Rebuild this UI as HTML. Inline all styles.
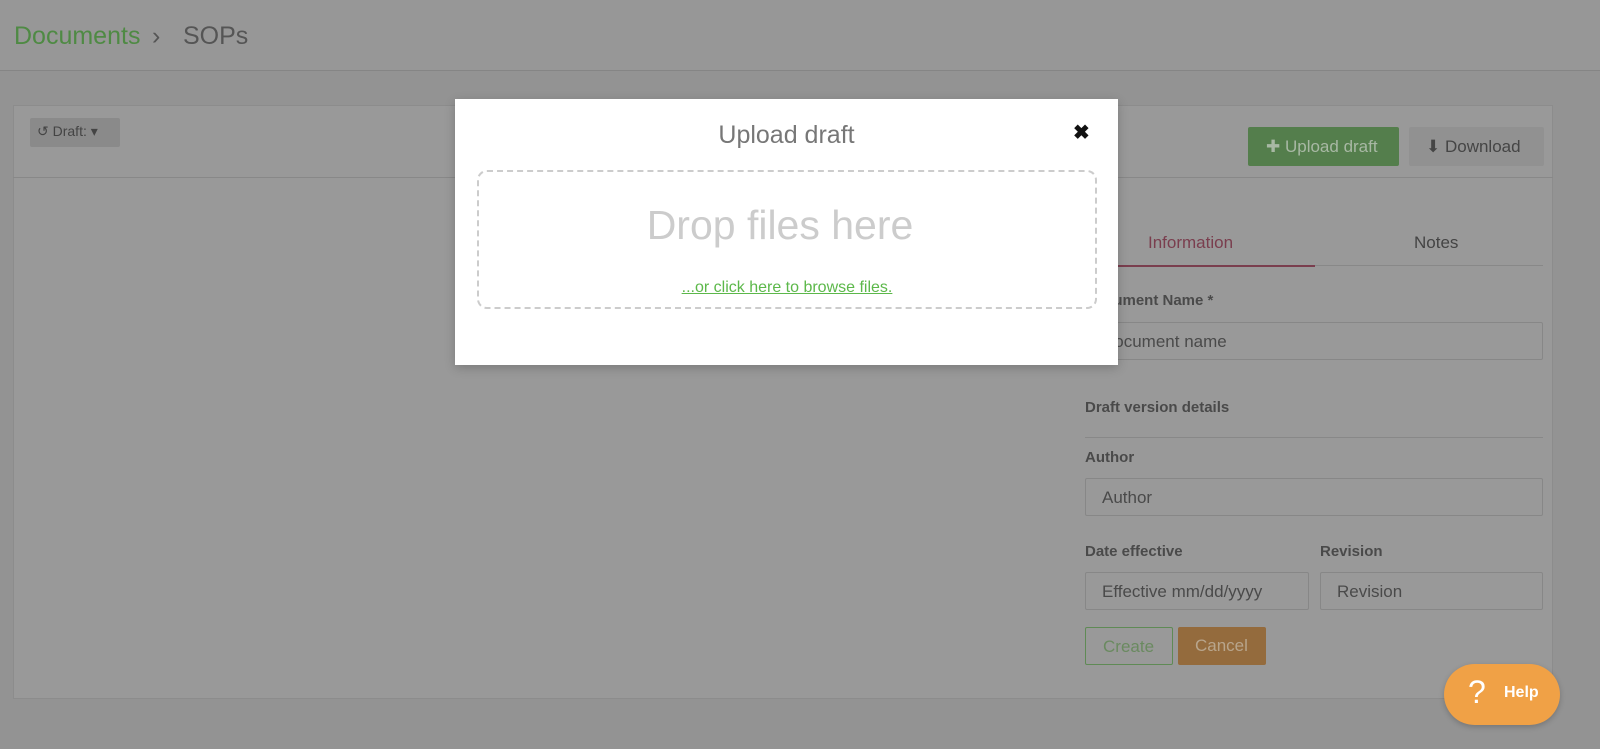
<!DOCTYPE html>
<html><head><style>
*{box-sizing:border-box;margin:0;padding:0}
body{width:1600px;height:749px;background:#939393;font-family:"Liberation Sans",sans-serif;position:relative;overflow:hidden}
.a{position:absolute}
.hdr{left:0;top:0;width:1600px;height:71px;background:#979797;border-bottom:1px solid #858585}
.card{left:13px;top:105px;width:1540px;height:594px;background:#999;border:1px solid #8c8c8c}
.inp{position:absolute;height:38px;border:1px solid #878787;border-radius:2px;background:#999;color:#4a4a4a;font-size:17px;padding:9px 16px}
.lbl{position:absolute;color:#4a4a4a;font-size:15px;font-weight:bold}
</style></head><body>
<div class="a hdr"></div>
<div class="a" style="left:14px;top:22px;font-size:25px;color:#4f8a44">Documents</div>
<div class="a" style="left:152px;top:22px;font-size:25px;color:#555">›</div>
<div class="a" style="left:183px;top:22px;font-size:25px;color:#555">SOPs</div>
<div class="a card"></div>
<div class="a" style="left:13px;top:177px;width:1540px;height:1px;background:#888"></div>
<div class="a" style="left:30px;top:118px;width:90px;height:29px;background:#8a8a8a;border-radius:2px;color:#444;font-size:14px;padding:5px 0 0 7px">↺ Draft: ▾</div>
<div class="a" style="left:1248px;top:127px;width:151px;height:39px;background:#547e4c;border-radius:2px;color:#9a9a9a;font-size:17px;padding:10px 0 0 18px;color:#a8b8a4">✚ Upload draft</div>
<div class="a" style="left:1409px;top:127px;width:135px;height:39px;background:#919191;border-radius:2px;color:#454545;font-size:17px;padding:10px 0 0 17px">⬇ Download</div>
<div class="a" style="left:1148px;top:233px;font-size:17px;color:#7a3e4e">Information</div>
<div class="a" style="left:1414px;top:233px;font-size:17px;color:#444">Notes</div>
<div class="a" style="left:1085px;top:265px;width:458px;height:1px;background:#888"></div>
<div class="a" style="left:1085px;top:265px;width:230px;height:2px;background:#7a3e4e"></div>
<div class="lbl" style="left:1085px;top:292px">Document Name *</div>
<div class="inp" style="left:1085px;top:322px;width:458px">Document name</div>
<div class="lbl" style="left:1085px;top:399px">Draft version details</div>
<div class="a" style="left:1085px;top:437px;width:458px;height:1px;background:#888"></div>
<div class="lbl" style="left:1085px;top:449px">Author</div>
<div class="inp" style="left:1085px;top:478px;width:458px">Author</div>
<div class="lbl" style="left:1085px;top:543px">Date effective</div>
<div class="lbl" style="left:1320px;top:543px">Revision</div>
<div class="inp" style="left:1085px;top:572px;width:224px">Effective mm/dd/yyyy</div>
<div class="inp" style="left:1320px;top:572px;width:223px">Revision</div>
<div class="a" style="left:1085px;top:627px;width:88px;height:38px;border:1px solid #5f8a55;border-radius:2px;color:#6a8a60;font-size:17px;padding:9px 0 0 17px">Create</div>
<div class="a" style="left:1178px;top:627px;width:88px;height:38px;background:#946b3d;border-radius:2px;color:#b8a58c;font-size:17px;padding:9px 0 0 17px">Cancel</div>
<div class="a" style="left:1444px;top:664px;width:116px;height:61px;background:#f0a146;border-radius:31px;color:#fff;box-shadow:0 2px 6px rgba(0,0,0,.2)">
<span class="a" style="left:24px;top:10px;font-size:32px;font-weight:300">?</span>
<span class="a" style="left:60px;top:20px;font-size:16px;font-weight:bold">Help</span></div>
<div class="a" style="left:455px;top:99px;width:663px;height:266px;background:#fff;box-shadow:0 3px 10px rgba(0,0,0,.2)"></div>
<div class="a" style="left:455px;top:121px;width:663px;text-align:center;font-size:25px;color:#777">Upload draft</div>
<div class="a" style="left:1073px;top:120px;font-size:20px;color:#111;font-weight:bold">✖</div>
<div class="a" style="left:477px;top:170px;width:620px;height:139px;border:2px dashed #ccc;border-radius:10px"></div>
<div class="a" style="left:477px;top:202px;width:606px;text-align:center;font-size:41px;color:#ccc">Drop files here</div>
<div class="a" style="left:477px;top:279px;width:620px;text-align:center;font-size:16px;color:#5cb84a;text-decoration:underline">...or click here to browse files.</div>
</body></html>
